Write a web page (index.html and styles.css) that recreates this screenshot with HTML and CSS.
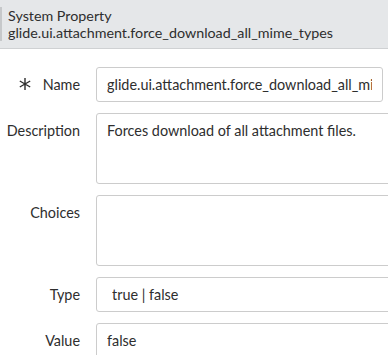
FILE: index.html
```html
<!DOCTYPE html>
<html lang="en">
<head>
    <meta charset="UTF-8">
    <title>System Property</title>
    <link rel="stylesheet" href="styles.css">
</head>
<body>
    <div class="header">
        <div class="title">
            <div>System Property</div>
            <div>glide.ui.attachment.force_download_all_mime_types</div>
        </div>
    </div>

    <form class="form">
        <div class="row">
            <label class="label" for="name">
                <svg class="req" width="14" height="14" viewBox="0 0 14 14">
                    <path d="M7 1v12M1.8 4l10.4 6M1.8 10l10.4-6" stroke="#2e2e2e" stroke-width="1.4" fill="none"/>
                </svg>Name
            </label>
            <input class="field input" id="name" value="glide.ui.attachment.force_download_all_mime_types">
        </div>
        <div class="row">
            <label class="label" for="desc">Description</label>
            <textarea class="field area" id="desc">Forces download of all attachment files.</textarea>
        </div>
        <div class="row">
            <label class="label" for="choices">Choices</label>
            <textarea class="field area" id="choices"></textarea>
        </div>
        <div class="row">
            <label class="label" for="type">Type</label>
            <select class="field input select" id="type">
                <option>true | false</option>
            </select>
        </div>
        <div class="row">
            <label class="label" for="value">Value</label>
            <input class="field input wide" id="value" value="false">
        </div>
    </form>
</body>
</html>
```

FILE: styles.css
```css
body {
    margin: 0;
    font-family: Lato, "Open Sans", sans-serif;
    font-size: 14.4px;
    color: #2e2e2e;
    background: #ffffff;
}

.header {
    background-color: #e5e7e9;
    border-bottom: 1px solid #cfd1d3;
    height: 49px;
    padding-top: 7px;
    box-sizing: border-box;
}

.title {
    border-left: 2px solid #c6c8ca;
    padding-left: 6px;
    line-height: 17px;
    font-size: 14.3px;
}

.form {
    margin: 0;
    padding-top: 18px;
}

.row {
    display: flex;
    align-items: flex-start;
    margin-bottom: 11px;
}

.label {
    width: 80px;
    flex-shrink: 0;
    text-align: right;
    padding-right: 16px;
    line-height: 35px;
    white-space: nowrap;
}

.req {
    vertical-align: -1px;
    margin-right: 11px;
}

.field {
    display: block;
    margin: 0;
    border: 1px solid #cccccc;
    border-radius: 3px;
    box-sizing: border-box;
    padding: 0 10px;
    font: inherit;
    color: #2e2e2e;
    background: #ffffff;
    outline: none;
}

.input {
    height: 35px;
    width: 287px;
    flex-shrink: 0;
}

.area {
    height: 71px;
    width: 310px;
    flex-shrink: 0;
    padding-top: 7px;
    resize: none;
    line-height: 20px;
}

.select {
    width: 310px;
    padding-left: 15px;
    appearance: none;
    -webkit-appearance: none;
}

.wide {
    width: 310px;
}
```
